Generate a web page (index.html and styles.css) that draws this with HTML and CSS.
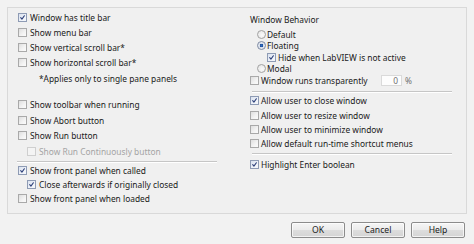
FILE: index.html
```html
<!DOCTYPE html>
<html>
<head>
<meta charset="utf-8">
<link rel="stylesheet" href="styles.css">
</head>
<body>
<div class="dialog">
  <div class="panel">
    <div class="col left">
      <div class="row"><span class="cb on"><svg viewBox="0 0 9 9"><path d="M2.2 4.6 L3.8 6.6 L6.9 2.2"/></svg></span><span>Window has title bar</span></div>
      <div class="row"><span class="cb"></span><span>Show menu bar</span></div>
      <div class="row"><span class="cb"></span><span>Show vertical scroll bar*</span></div>
      <div class="row"><span class="cb"></span><span>Show horizontal scroll bar*</span></div>
      <div class="row note"><span>*Applies only to single pane panels</span></div>
      <div class="row gap-lg"><span class="cb"></span><span>Show toolbar when running</span></div>
      <div class="row mt1"><span class="cb"></span><span>Show Abort button</span></div>
      <div class="row"><span class="cb"></span><span>Show Run button</span></div>
      <div class="row mt1 indent disabled"><span class="cb"></span><span>Show Run Continuously button</span></div>
      <div class="sep sep-left"></div>
      <div class="row tight"><span class="cb on"><svg viewBox="0 0 9 9"><path d="M2.2 4.6 L3.8 6.6 L6.9 2.2"/></svg></span><span>Show front panel when called</span></div>
      <div class="row tight indent"><span class="cb on"><svg viewBox="0 0 9 9"><path d="M2.2 4.6 L3.8 6.6 L6.9 2.2"/></svg></span><span>Close afterwards if originally closed</span></div>
      <div class="row"><span class="cb"></span><span>Show front panel when loaded</span></div>
    </div>
    <div class="col right">
      <div class="row heading"><span>Window Behavior</span></div>
      <div class="row small first-radio radio-row"><span class="rb"></span><span>Default</span></div>
      <div class="row small radio-row"><span class="rb on"></span><span>Floating</span></div>
      <div class="row small sub"><span class="cb on"><svg viewBox="0 0 9 9"><path d="M2.2 4.6 L3.8 6.6 L6.9 2.2"/></svg></span><span>Hide when LabVIEW is not active</span></div>
      <div class="row small radio-row"><span class="rb"></span><span>Modal</span></div>
      <div class="row small"><span class="cb"></span><span>Window runs transparently</span>
        <span class="numgroup"><span class="num">0</span><span class="pct">%</span></span></div>
      <div class="sep sep-right"></div>
      <div class="row mid"><span class="cb on"><svg viewBox="0 0 9 9"><path d="M2.2 4.6 L3.8 6.6 L6.9 2.2"/></svg></span><span>Allow user to close window</span></div>
      <div class="row mid"><span class="cb"></span><span>Allow user to resize window</span></div>
      <div class="row mid"><span class="cb"></span><span>Allow user to minimize window</span></div>
      <div class="row mid"><span class="cb"></span><span>Allow default run-time shortcut menus</span></div>
      <div class="sep sep-right sep-2"></div>
      <div class="row highlight"><span class="cb on"><svg viewBox="0 0 9 9"><path d="M2.2 4.6 L3.8 6.6 L6.9 2.2"/></svg></span><span>Highlight Enter boolean</span></div>
    </div>
  </div>
  <div class="footer">
    <button class="btn">OK</button>
    <button class="btn">Cancel</button>
    <button class="btn">Help</button>
  </div>
</div>
</body>
</html>
```
FILE: styles.css
```css
html, body {
  margin: 0;
  padding: 0;
  background: #f2f2f2;
}
body {
  font-family: "Noto Sans", "Open Sans", sans-serif;
  font-size: 8.4px;
  color: #1a1a1a;
  width: 474px;
  height: 244px;
  overflow: hidden;
}
.dialog {
  padding: 7px 0 0 7px;
}
.panel {
  box-sizing: border-box;
  width: 460px;
  height: 207px;
  border: 1px solid #d9d9d9;
  background: #f0f0f0;
  display: grid;
  grid-template-columns: 242px 1fr;
}
.col {
  display: flex;
  flex-direction: column;
}
.left {
  padding: 2px 0 0 10px;
}
.right {
  padding: 2px 14px 0 0;
}
.row {
  height: 15px;
  display: flex;
  align-items: center;
  white-space: nowrap;
}
.row > .cb { margin-right: 3px; }
.note { margin-top: 1px; padding-left: 21px; }
.gap-lg { margin-top: 11px; }
.mt1 { margin-top: 1px; }
.indent { padding-left: 9px; }
.tight { height: 14px; }
.disabled { color: #a4a4a4; }
.disabled .cb {
  border-color: #cfcfcf;
  background: #f4f4f4;
}
.cb {
  box-sizing: border-box;
  width: 9px;
  height: 9px;
  flex: none;
  border: 1px solid #a9a9a9;
  background: linear-gradient(135deg, #dedede 0%, #f3f3f3 60%, #fbfbfb 100%);
  display: inline-flex;
}
.cb.on {
  border-color: #8e9bb4;
  background: linear-gradient(135deg, #d9e1ef 0%, #f2f5fa 70%);
}
.cb svg {
  width: 7px;
  height: 7px;
  margin: 0;
}
.cb svg path {
  fill: none;
  stroke: #2b3e78;
  stroke-width: 1.4;
  stroke-linecap: round;
  stroke-linejoin: round;
}
.rb {
  box-sizing: border-box;
  width: 9px;
  height: 9px;
  flex: none;
  border-radius: 50%;
  border: 1px solid #a2a2a2;
  background: radial-gradient(circle at 60% 60%, #fafafa 0%, #e2e2e2 100%);
  margin-right: 1px;
}
.rb.on {
  border-color: #7e8aa2;
  background: radial-gradient(circle, #2f6fc4 0%, #1f4f9c 32%, #d6deea 40%, #f2f4f8 100%);
}
.sep {
  height: 1px;
  background: #c6c6c6;
  border-bottom: 1px solid #ffffff;
  flex: none;
}
.sep-left {
  margin: 2px 0 0 -1px;
  width: 200px;
}
.heading { margin-top: 2px; }
.small { height: 11.5px; }
.first-radio { margin-top: 1.25px; }
.radio-row { padding-left: 7px; }
.sub { padding-left: 17px; }
.numgroup {
  margin-left: auto;
  margin-right: 40px;
  display: flex;
  align-items: center;
}
.num {
  box-sizing: border-box;
  width: 21px;
  height: 11px;
  border: 1px solid #dadada;
  background: #fdfdfd;
  text-align: right;
  padding-right: 3px;
  line-height: 9px;
  color: #707070;
}
.pct {
  margin-left: 3px;
  color: #707070;
}
.sep-right {
  margin: 5px 0 0 2px;
  width: 200px;
}
.mid { height: 14.33px; }
.sep-right + .mid { margin-top: 1px; }
.sep-2 { margin-top: 1.7px; }
.highlight { margin-top: 2px; }
.right .row > .cb { margin-right: 2px; }
.footer {
  display: flex;
  justify-content: flex-end;
  gap: 6px;
  padding: 8px 9px 0 0;
}
.btn {
  box-sizing: border-box;
  width: 54px;
  height: 16px;
  margin: 0;
  padding: 0;
  font-family: "Noto Sans", "Open Sans", sans-serif;
  font-size: 8.6px;
  color: #1a1a1a;
  border: 1px solid #8c8c8c;
  border-radius: 2px;
  background: linear-gradient(to bottom, #f6f6f6 0%, #ebebeb 50%, #dddddd 51%, #d4d4d4 100%);
  box-shadow: inset 0 0 0 1px rgba(255,255,255,0.7);
}
```
